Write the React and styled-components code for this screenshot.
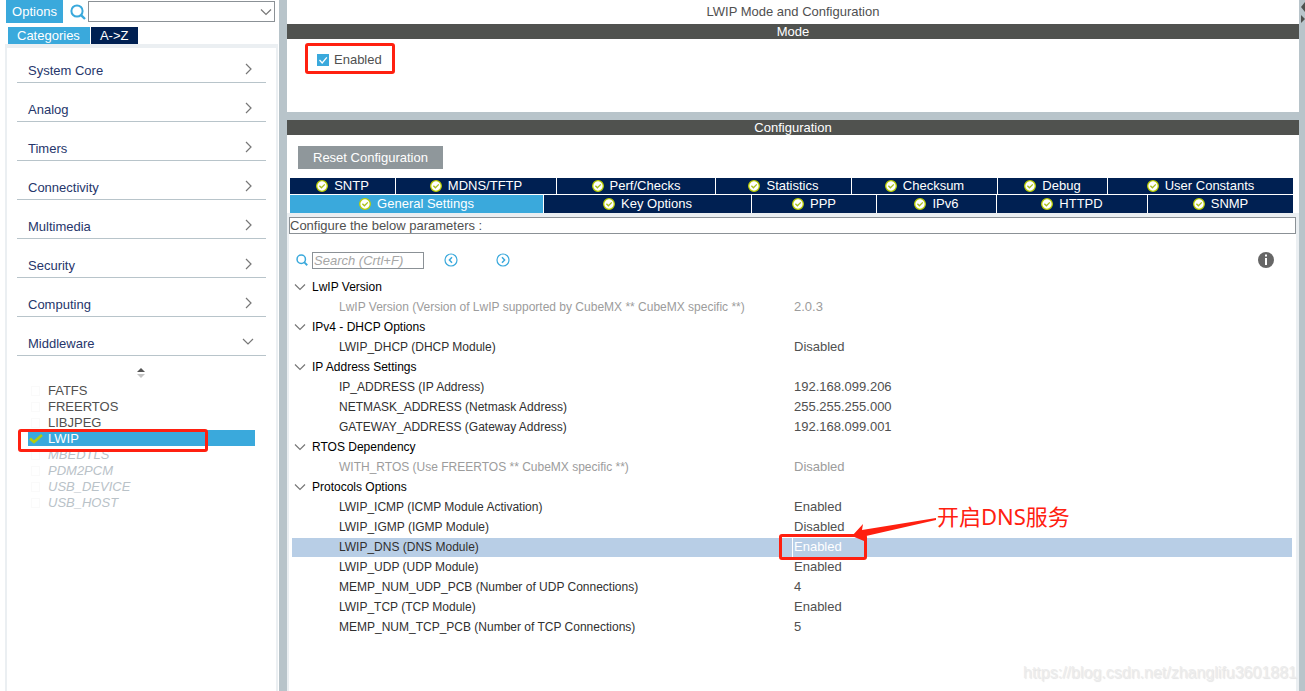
import React from "react";
import styled, { createGlobalStyle } from "styled-components";

const sky = "#3aa9dc";
const navy = "#002052";
const steel = "#b8c4ca";
const pale = "#ebeff2";
const grey = "#50524f";
const red = "#ff2010";

const GlobalStyle = createGlobalStyle`
  * {
    box-sizing: border-box;
  }
  body {
    margin: 0;
    background: #fff;
    color: #505050;
    font: 13px/16px "Liberation Sans", Arial, sans-serif;
  }
  button, input, select {
    margin: 0;
    padding: 0;
    border: 0;
    border-radius: 0;
    font: inherit;
  }
`;

const Root = styled.div`
  position: relative;
  display: flex;
  min-height: 100vh;
  overflow: hidden;
`;

/* left side */
const Sidebar = styled.aside`
  flex: none;
  display: flex;
  flex-direction: column;
  width: 279px;
  padding-left: 5px;
`;
const Toolbar = styled.div`
  display: flex;
  align-items: flex-start;
  height: 27px;
  padding: 0 4px 0 1px;
`;
const OptionsButton = styled.button`
  width: 57px;
  height: 23px;
  background: ${sky};
  color: #fff;
`;
const FinderLabel = styled.label`
  flex: 1;
  display: flex;
  align-items: center;
  gap: 2px;
  height: 23px;
  padding-left: 7px;
`;
const ComboWrap = styled.span`
  position: relative;
  flex: 1;
  display: flex;
`;
const Combo = styled.select`
  flex: 1;
  height: 21px;
  border: 1px solid #8b9196;
  background: #fff;
  appearance: none;
`;
const ComboArrow = styled.span`
  position: absolute;
  top: 0;
  right: 3px;
  display: flex;
  align-items: center;
  height: 21px;
  pointer-events: none;
`;
const ViewTabs = styled.div`
  display: flex;
  gap: 1px;
  padding-left: 3px;
`;
const ViewTab = styled.button`
  height: 17px;
  padding: 0 10px 0 9px;
  background: ${props => (props.$active ? sky : navy)};
  color: #fff;
`;
const CategoryFrame = styled.div`
  flex: 1;
  display: flex;
  flex-direction: column;
  gap: 14px;
  margin-right: 1px;
  padding: 10px 10px 0;
  border: solid ${pale};
  border-width: 4px 2px 0;
`;
const Category = styled.button`
  display: flex;
  align-items: flex-start;
  justify-content: space-between;
  height: 25px;
  padding: 4px 12px 0 11px;
  border-bottom: 1px solid ${steel};
  background: none;
  color: #26366b;
  line-height: 18px;
  text-align: left;
`;
const Sorter = styled.button`
  align-self: center;
  display: flex;
  height: 10px;
  margin: -2px 2px 0 0;
  background: none;
`;
const ModuleList = styled.ul`
  margin: -10px 11px 0;
  padding: 0;
  list-style: none;
`;
const Module = styled.li`
  position: relative;
  height: 16px;
  background: ${props => (props.$selected ? sky : "none")};
  color: ${props => (props.$selected ? "#fff" : props.$off ? "#b9c2c8" : "#505050")};
  font-style: ${props => (props.$off ? "italic" : "normal")};
  line-height: 18px;
`;
const ModuleLabel = styled.label`
  display: flex;
  align-items: center;
  gap: 8px;
  padding-left: 3px;
`;
const ModuleCheck = styled.input`
  width: 9px;
  height: 10px;
  border: 1px solid ${props => (props.checked ? "transparent" : "#fafafa")};
  appearance: none;
`;
const ModuleTick = styled.svg`
  position: absolute;
  top: 3px;
  left: 1px;
`;

/* right side */
const Splitter = styled.div`
  flex: none;
  width: 8px;
  background: ${steel};
`;
const Main = styled.main`
  flex: 1;
  display: flex;
  flex-direction: column;
  min-width: 0;
`;
const Gutter = styled.div`
  flex: none;
  width: 6px;
  background: ${steel};
`;
const Title = styled.h1`
  height: 24px;
  margin: 0;
  font-size: 13px;
  font-weight: normal;
  line-height: 23px;
  text-align: center;
`;
const SectionBar = styled.h2`
  margin: 0;
  background: ${grey};
  color: #fff;
  font-size: 13px;
  font-weight: normal;
  line-height: 15px;
  text-align: center;
`;
const ModeBody = styled.div`
  height: 81px;
  padding: 4px 18px;
  border-bottom: 8px solid ${steel};
`;
const EnabledLabel = styled.label`
  display: inline-flex;
  align-items: center;
  gap: 5px;
  height: 31px;
  padding: 2px 10px 0 9px;
  border: 3px solid ${red};
  border-radius: 3px;
`;
const CheckBox = styled.span`
  display: grid;
  width: 12px;
  height: 12px;
  background: ${sky};

  > * {
    grid-area: 1 / 1;
  }
`;
const CheckInput = styled.input`
  width: 12px;
  height: 12px;
  appearance: none;
`;
const ResetRow = styled.div`
  padding: 11px 11px 9px;
`;
const ResetButton = styled.button`
  display: block;
  height: 23px;
  padding: 0 15px;
  background: #8f979b;
  color: #fff;
`;
const TabRows = styled.div`
  display: flex;
  flex-direction: column;
  gap: 1px;
  padding: 0 6px 0 3px;
`;
const TabRow = styled.div`
  display: flex;
  gap: 1px;
  height: ${props => props.$height}px;
`;
const Tab = styled.button`
  flex: ${props => props.$grow} 1 0;
  display: flex;
  align-items: center;
  justify-content: center;
  gap: 6px;
  background: ${props => (props.$active ? sky : navy)};
  color: #fff;
`;
const ParamFrame = styled.section`
  flex: 1;
  border: solid ${pale};
  border-width: 4px 3px 0 2px;
`;
const Hint = styled.p`
  margin: 0;
  border: 1px solid #8b9196;
  line-height: 15px;
`;
const SearchRow = styled.div`
  display: flex;
  align-items: center;
  height: 20px;
  margin: 16px 22px 7px 7px;
`;
const SearchLabel = styled.label`
  display: flex;
  align-items: center;
  gap: 4px;
`;
const SearchInput = styled.input`
  width: 112px;
  height: 17px;
  padding-left: 1px;
  border: 1px solid #8b9196;

  &::placeholder {
    color: #a6a6a6;
    font-style: italic;
  }
`;
const IconButton = styled.button`
  display: flex;
  margin-left: ${props => props.$space};
  background: none;
`;
const ParamTable = styled.table`
  width: calc(100% - 7px);
  margin-left: 3px;
  border-collapse: collapse;
  table-layout: fixed;
  font-size: 12px;

  td, th {
    height: 20px;
    padding: 0 0 0 2px;
    font-weight: normal;
    text-align: left;
  }
`;
const GroupCell = styled.th`
  color: #000;
`;
const GroupButton = styled.button`
  display: flex;
  align-items: center;
  gap: 6px;
  background: none;
  color: inherit;
`;
const ParamRow = styled.tr`
  height: 20px;
  background: ${props => (props.$selected ? "linear-gradient(#fff 1px, #b8cee6 1px)" : "none")};
  color: ${props => (props.$off ? "#9c9c9c" : "#303030")};

  && td:first-child {
    padding-left: 47px;
  }
`;
const ValueCell = styled.td`
  position: relative;
  color: ${props => (props.$selected ? "#fff" : props.$off ? "#9c9c9c" : "#505050")};
  font-size: 13px;
  box-shadow: ${props => (props.$selected ? "inset 1px 0 #fff" : "none")};
`;

/* marks drawn over the content */
const Marker = styled.span`
  position: absolute;
  top: ${props => props.$top}px;
  left: ${props => props.$left}px;
  z-index: 1;
  width: ${props => props.$width}px;
  height: ${props => props.$height}px;
  border: 3px solid ${red};
  border-radius: 3px;
  pointer-events: none;
`;
const Callout = styled.span`
  position: absolute;
  top: -33px;
  left: 59px;
  z-index: 2;
  display: flex;
  color: ${red};
  font: 22px/24px "Noto Sans", "Noto Sans CJK SC", sans-serif;
  white-space: nowrap;
`;
const Watermark = styled.span`
  position: absolute;
  right: 8px;
  bottom: 8px;
  color: #ececec;
  font-size: 16px;
  line-height: 20px;
  text-shadow: 1px 1px 1px #e4e4e4;
`;

const categories = [
  "System Core",
  "Analog",
  "Timers",
  "Connectivity",
  "Multimedia",
  "Security",
  "Computing"
];

const modules = [
  { name: "FATFS" },
  { name: "FREERTOS" },
  { name: "LIBJPEG" },
  { name: "LWIP", selected: true },
  { name: "MBEDTLS", off: true },
  { name: "PDM2PCM", off: true },
  { name: "USB_DEVICE", off: true },
  { name: "USB_HOST", off: true }
];

const tabRows = [
  {
    height: 16,
    tabs: [
      ["SNTP", 105],
      ["MDNS/TFTP", 160],
      ["Perf/Checks", 158],
      ["Statistics", 135],
      ["Checksum", 145],
      ["Debug", 109],
      ["User Constants", 185]
    ]
  },
  {
    height: 18,
    tabs: [
      ["General Settings", 253],
      ["Key Options", 207],
      ["PPP", 124],
      ["IPv6", 119],
      ["HTTPD", 150],
      ["SNMP", 145]
    ]
  }
];

const groups = [
  {
    title: "LwIP Version",
    params: [
      {
        name: "LwIP Version (Version of LwIP supported by CubeMX ** CubeMX specific **)",
        value: "2.0.3",
        off: true
      }
    ]
  },
  {
    title: "IPv4 - DHCP Options",
    params: [{ name: "LWIP_DHCP (DHCP Module)", value: "Disabled" }]
  },
  {
    title: "IP Address Settings",
    params: [
      { name: "IP_ADDRESS (IP Address)", value: "192.168.099.206" },
      { name: "NETMASK_ADDRESS (Netmask Address)", value: "255.255.255.000" },
      { name: "GATEWAY_ADDRESS (Gateway Address)", value: "192.168.099.001" }
    ]
  },
  {
    title: "RTOS Dependency",
    params: [
      {
        name: "WITH_RTOS (Use FREERTOS ** CubeMX specific **)",
        value: "Disabled",
        off: true
      }
    ]
  },
  {
    title: "Protocols Options",
    params: [
      { name: "LWIP_ICMP (ICMP Module Activation)", value: "Enabled" },
      { name: "LWIP_IGMP (IGMP Module)", value: "Disabled" },
      { name: "LWIP_DNS (DNS Module)", value: "Enabled", selected: true },
      { name: "LWIP_UDP (UDP Module)", value: "Enabled" },
      { name: "MEMP_NUM_UDP_PCB (Number of UDP Connections)", value: "4" },
      { name: "LWIP_TCP (TCP Module)", value: "Enabled" },
      { name: "MEMP_NUM_TCP_PCB (Number of TCP Connections)", value: "5" }
    ]
  }
];

const Magnifier = ({ size }) => (
  <svg width={size} height={size} viewBox="0 0 16 16" fill="none" stroke={sky} strokeWidth="2">
    <circle cx="7" cy="7" r="5.6" />
    <path d="M10.8 10.8L15 15" strokeWidth="2.4" />
  </svg>
);

const ChevronDown = () => (
  <svg width="12" height="8" viewBox="0 0 12 8" fill="none" stroke="#777" strokeWidth="1.2">
    <path d="M1 1.5l5 5 5-5" />
  </svg>
);

const ChevronRight = () => (
  <svg width="12" height="14" viewBox="0 0 12 14" fill="none" stroke="#777" strokeWidth="1.2">
    <path d="M4 2l5 5-5 5" />
  </svg>
);

const OkBadge = () => (
  <svg width="12" height="12" viewBox="0 0 12 12" fill="none">
    <circle cx="6" cy="6" r="5.3" fill="#fff" stroke="#bccf00" strokeWidth="1.3" />
    <path d="M3.4 5.8l2 2 3.4-3.4" stroke="#a9bf1c" strokeWidth="1.3" />
  </svg>
);

const StepIcon = ({ d }) => (
  <svg width="14" height="14" viewBox="0 0 14 14" fill="none" stroke={sky} strokeWidth="1.2">
    <circle cx="7" cy="7" r="6" />
    <path d={d} strokeWidth="1.5" />
  </svg>
);

const InfoIcon = () => (
  <svg width="16" height="16" viewBox="0 0 16 16">
    <circle cx="8" cy="8" r="8" fill="#666" />
    <path d="M7 2.6h2v2H7zM7 6h2v7H7z" fill="#fff" />
  </svg>
);

const SidePanel = () => (
  <Sidebar>
    <Toolbar>
      <OptionsButton>Options</OptionsButton>
      <FinderLabel>
        <Magnifier size={16} />
        <ComboWrap>
          <Combo aria-label="Find" />
          <ComboArrow>
            <ChevronDown />
          </ComboArrow>
        </ComboWrap>
      </FinderLabel>
    </Toolbar>
    <ViewTabs>
      <ViewTab $active>Categories</ViewTab>
      <ViewTab>{"A->Z"}</ViewTab>
    </ViewTabs>
    <CategoryFrame>
      {categories.map(name => (
        <Category key={name}>
          {name}
          <ChevronRight />
        </Category>
      ))}
      <Category>
        Middleware
        <svg width="12" height="14" viewBox="0 0 12 14" fill="none" stroke="#777" strokeWidth="1.2">
          <path d="M1 4l5 5 5-5" />
        </svg>
      </Category>
      <Sorter aria-label="Sort">
        <svg width="10" height="10" viewBox="0 0 10 10">
          <path d="M1 4l4-4 4 4z" fill="#555" />
          <path d="M1 6h8l-4 4z" fill="#c4c4c4" />
        </svg>
      </Sorter>
      <ModuleList>
        {modules.map(({ name, selected, off }) => (
          <Module key={name} $selected={selected} $off={off}>
            <ModuleLabel>
              <ModuleCheck type="checkbox" checked={!!selected} disabled={off} readOnly />
              {name}
            </ModuleLabel>
            {selected && (
              <>
                <ModuleTick width="14" height="11" viewBox="0 0 14 11" fill="none">
                  <path d="M1 5.5l4 3.5 8-7" stroke="#b4cc0c" strokeWidth="2.6" />
                </ModuleTick>
                <Marker $top={-1} $left={-10} $width={190} $height={23} />
              </>
            )}
          </Module>
        ))}
      </ModuleList>
    </CategoryFrame>
  </Sidebar>
);

const DnsCallout = () => (
  <>
    <Marker $top={-3} $left={-13} $width={88} $height={26} />
    <Callout>
      <svg width="86" height="40" viewBox="0 0 86 40">
        <path d="M1 32L12 20l-1 6L85 14v2L15 32l-2 5z" fill={red} />
      </svg>
      开启DNS服务
    </Callout>
  </>
);

const Parameters = () => (
  <ParamTable>
    <tbody>
      {groups.map(({ title, params }) => (
        <React.Fragment key={title}>
          <tr>
            <GroupCell colSpan={2}>
              <GroupButton>
                <ChevronDown />
                {title}
              </GroupButton>
            </GroupCell>
          </tr>
          {params.map(({ name, value, off, selected }) => (
            <ParamRow key={name} $off={off} $selected={selected}>
              <td>{name}</td>
              <ValueCell $off={off} $selected={selected}>
                {value}
                {selected && <DnsCallout />}
              </ValueCell>
            </ParamRow>
          ))}
        </React.Fragment>
      ))}
    </tbody>
  </ParamTable>
);

const App = () => (
  <Root>
    <GlobalStyle />
    <SidePanel />
    <Splitter />
    <Main>
      <Title>LWIP Mode and Configuration</Title>
      <SectionBar>Mode</SectionBar>
      <ModeBody>
        <EnabledLabel>
          <CheckBox>
            <CheckInput type="checkbox" defaultChecked />
            <svg width="12" height="12" viewBox="0 0 12 12" fill="none" stroke="#fff" strokeWidth="1.3">
              <path d="M2.5 6l2.7 3 4.6-5.6" />
            </svg>
          </CheckBox>
          Enabled
        </EnabledLabel>
      </ModeBody>
      <SectionBar>Configuration</SectionBar>
      <ResetRow>
        <ResetButton>Reset Configuration</ResetButton>
      </ResetRow>
      <TabRows>
        {tabRows.map(({ height, tabs }) => (
          <TabRow key={height} $height={height}>
            {tabs.map(([name, grow]) => (
              <Tab key={name} $grow={grow} $active={name === "General Settings"}>
                <OkBadge />
                {name}
              </Tab>
            ))}
          </TabRow>
        ))}
      </TabRows>
      <ParamFrame>
        <Hint>Configure the below parameters :</Hint>
        <SearchRow>
          <SearchLabel>
            <Magnifier size={12} />
            <SearchInput aria-label="Search" placeholder="Search (Crtl+F)" />
          </SearchLabel>
          <IconButton $space="20px" aria-label="Previous">
            <StepIcon d="M8 4.2L5.4 7 8 9.8" />
          </IconButton>
          <IconButton $space="38px" aria-label="Next">
            <StepIcon d="M6 4.2L8.6 7 6 9.8" />
          </IconButton>
          <IconButton $space="auto" aria-label="Info">
            <InfoIcon />
          </IconButton>
        </SearchRow>
        <Parameters />
      </ParamFrame>
    </Main>
    <Gutter>
      <svg width="6" height="24" viewBox="0 0 6 24" fill={grey}>
        <path d="M6 2v10L2 7zM2 15l4 4-4 4z" />
      </svg>
    </Gutter>
    <Watermark>https://blog.csdn.net/zhanglifu3601881</Watermark>
  </Root>
);

export default App;
